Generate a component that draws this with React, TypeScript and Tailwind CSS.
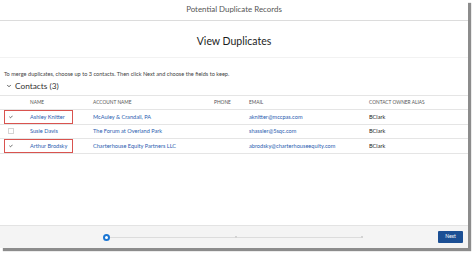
import { ChevronDown, Check } from 'lucide-react';

type Row = {
  name: string;
  account: string;
  email: string;
  owner: string;
  checked: boolean;
};

const rows: Row[] = [
  { name: 'Ashley Knitter', account: 'McAuley & Crandall, PA', email: 'aknitter@mccpas.com', owner: 'BClark', checked: true },
  { name: 'Susie Davis', account: 'The Forum at Overland Park', email: 'shassler@5sqc.com', owner: 'BClark', checked: false },
  { name: 'Arthur Brodsky', account: 'Charterhouse Equity Partners LLC', email: 'abrodsky@charterhouseequity.com', owner: 'BClark', checked: true },
];

const ContactRow = ({ row }: { row: Row }) => (
  <div className="flex items-center h-[14.5px] border-b border-[#e5e5e5] text-[5.6px]">
    <div className="w-[93px] pl-[4px] flex items-center">
      <div
        className={`w-[69px] h-[14px] flex items-center ${
          row.checked ? 'border border-[#d9534f]' : 'border border-transparent'
        }`}
      >
        {row.checked ? (
          <span className="w-[6px] h-[6px] ml-[3px] flex items-center justify-center">
            <Check className="w-[4px] h-[4px] text-[#222]" strokeWidth={4} />
          </span>
        ) : (
          <span className="w-[6px] h-[6px] ml-[3px] border border-[#d4d4d4] bg-white" />
        )}
        <span className="ml-[16px] text-[#2a5db0]">{row.name}</span>
      </div>
    </div>
    <div className="w-[121px] text-[#2a5db0]">{row.account}</div>
    <div className="w-[35px]" />
    <div className="w-[120px] text-[#2a5db0]">{row.email}</div>
    <div className="flex-1 text-[#222]">{row.owner}</div>
  </div>
);

export default function App() {
  return (
    <div className="w-[474px] h-[253px] bg-white" style={{ fontFamily: 'Lato, "Open Sans", sans-serif' }}>
      <div className="w-[468px] h-[248px] bg-white flex flex-col shadow-[3px_3px_1px_rgba(0,0,0,0.45)]">
        <div className="h-[21px] border-b border-[#dcdcdc] flex items-center justify-center text-[7.9px] text-[#555]">
          Potential Duplicate Records
        </div>
        <div className="h-[37px] pt-[5px] border-b border-[#f2f2f2] flex items-center justify-center text-[10.5px] text-[#1d1d1d]">
          View Duplicates
        </div>
        <div className="flex-1 flex flex-col">
          <div className="pl-[4px] pt-[13px] text-[5.6px] text-[#444] leading-none">
            To merge duplicates, choose up to 3 contacts. Then click Next and choose the fields to keep.
          </div>
          <div className="flex items-center pl-[6px] mt-[5px] h-[9px] text-[8.3px] text-[#333]">
            <ChevronDown className="w-[6px] h-[6px] text-[#444]" strokeWidth={3.5} />
            <span className="ml-[3px]">Contacts (3)</span>
          </div>
          <div className="mt-[4px] border-t border-[#e5e5e5]">
            <div className="flex items-center h-[14.5px] border-b border-[#e5e5e5] text-[4.8px] text-[#555] uppercase">
              <div className="w-[93px] pl-[30px]">Name</div>
              <div className="w-[121px]">Account Name</div>
              <div className="w-[35px]">Phone</div>
              <div className="w-[120px]">Email</div>
              <div className="flex-1">Contact Owner Alias</div>
            </div>
            {rows.map((r) => (
              <ContactRow key={r.name} row={r} />
            ))}
          </div>
        </div>
        <div className="h-[23px] bg-[#f4f4f4] border-t border-[#e3e3e3] flex items-center">
          <div className="ml-[103px] flex items-center w-[260px]">
            <span className="w-[7px] h-[7px] rounded-full border-[2px] border-[#1b76d3] bg-white" />
            <span className="flex-1 h-px bg-[#dcdcdc]" />
            <span className="w-[2px] h-[2px] rounded-full bg-[#c8c8c8]" />
            <span className="flex-1 h-px bg-[#dcdcdc]" />
            <span className="w-[2px] h-[2px] rounded-full bg-[#c8c8c8]" />
          </div>
          <div className="ml-auto mr-[5px] w-[25px] h-[12px] rounded-[1px] bg-[#1b4f94] text-white text-[5px] flex items-center justify-center">
            Next
          </div>
        </div>
      </div>
    </div>
  );
}
